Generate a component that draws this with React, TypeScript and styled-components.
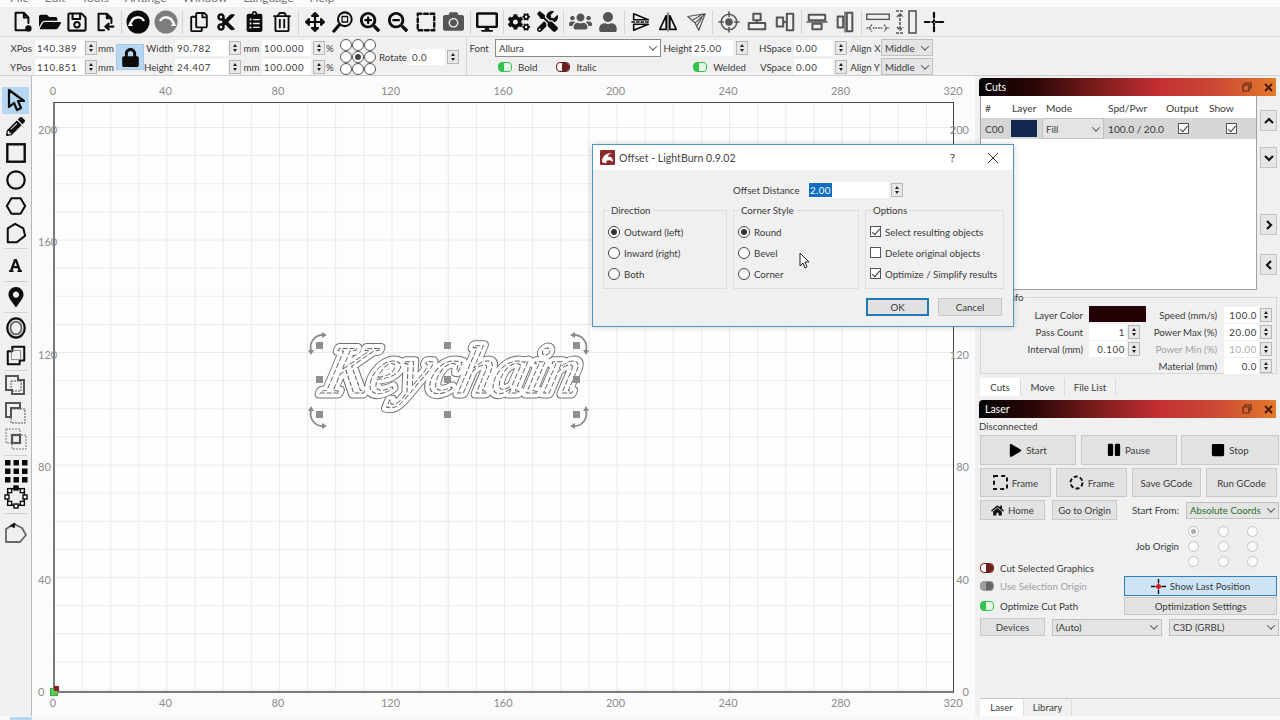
import React from "react";
import styled, { createGlobalStyle } from "styled-components";
import {
  FaFolderOpen, FaRegSave, FaCamera, FaRegTrashAlt, FaCut, FaRegCopy, FaClipboardList,
  FaArrowsAlt, FaSearchPlus, FaSearchMinus, FaDesktop, FaCogs, FaTools, FaUsers, FaUser,
  FaLock, FaHome, FaPlay, FaPause, FaStop, FaMapMarkerAlt, FaFont, FaPencilAlt,
} from "react-icons/fa";

const Global = createGlobalStyle`
  html, body { margin: 0; padding: 0; background: #f0f0f0; }
  body { font-family: Lato, "Open Sans", "Liberation Sans", sans-serif; font-size: 9.7px; color: #3a3a3a; }
  * { box-sizing: border-box; }
`;

const Page = styled.div`
  position: relative; width: 1280px; height: 720px; overflow: hidden;
  display: grid; grid-template-rows: 7px 30px 39px 640px 4px; background: #f0f0f0;
`;
const MenuBar = styled.div`
  display: flex; align-items: flex-end; gap: 16px; padding-left: 10px; background: #fbfbfb;
  overflow: hidden; font-size: 12px; line-height: 12px; color: #777;
  span { margin-bottom: 3px; }
`;
const ToolBar = styled.div`
  display: flex; align-items: center; padding-left: 8px; background: #f0f0f0;
  border-bottom: 1px solid #dcdcdc;
`;
const ToolBtn = styled.div<{ $dim?: boolean }>`
  width: 27.8px; height: 28px; flex: none; display: flex; align-items: center; justify-content: center;
  color: ${(p) => (p.$dim ? "#555" : "#0c0c0c")};
`;
const ToolSep = styled.div`
  width: 5px; height: 24px; flex: none; display: flex; justify-content: center;
  &::after { content: ""; width: 1px; height: 100%; background: #d4d4d4; }
`;
const PropBar = styled.div`
  display: flex; padding: 1px 0 0 8px; background: #f0f0f0; border-bottom: 1px solid #d0d0d0;
`;
const PropA = styled.div`
  display: grid; width: 452px; grid-template-rows: 19px 19px;
  grid-template-columns: 27px 49px 14px 18px 28px 31px 53px 13px 21px 49px 15px 14px 36px 34px 35px 15px;
`;
const PropB = styled.div`
  display: grid; margin-left: 6px; border-left: 1px solid #d4d4d4; width: 468px; grid-template-rows: 19px 19px;
  grid-template-columns: 28px 166px 31px 41px 17px 44px 39px 15px 33px 52px;
`;
const Lab = styled.div<{ $right?: boolean; $dim?: boolean; $col?: number }>`
  align-self: center; white-space: nowrap; font-size: 9.7px; line-height: 12px;
  text-align: ${(p) => (p.$right ? "right" : "left")}; color: ${(p) => (p.$dim ? "#a0a0a0" : "#3a3a3a")};
  ${(p) => (p.$col ? `grid-column: ${p.$col};` : "")}
`;
const RowSpan = styled(Lab)`
  grid-row: 1 / span 2; grid-column: 14; padding-left: 3px;
`;
const Field = styled.div<{ $right?: boolean; $dim?: boolean }>`
  height: 16px; align-self: center; background: #fff; padding: 0 2px; line-height: 16px; font-size: 9.7px; letter-spacing: 0.6px;
  white-space: nowrap; overflow: hidden; text-align: ${(p) => (p.$right ? "right" : "left")};
  color: ${(p) => (p.$dim ? "#aaa" : "#3a3a3a")};
`;
const RotateField = styled(Field)`
  grid-row: 1 / span 2; grid-column: 15;
`;
const SpinBox = styled.div`
  width: 12px; height: 14px; align-self: center; justify-self: center; background: #e8e8e8; border: 1px solid #b8b8b8;
  display: flex; flex-direction: column; align-items: center; justify-content: center; gap: 2px;
  &::before { content: ""; border: 2.5px solid transparent; border-top: 0; border-bottom: 3px solid #222; }
  &::after { content: ""; border: 2.5px solid transparent; border-bottom: 0; border-top: 3px solid #222; }
`;
const RotateSpin = styled(SpinBox)`
  grid-row: 1 / span 2; grid-column: 16;
`;
const LockCell = styled.div`
  grid-row: 1 / span 2; grid-column: 5; height: 26px; align-self: center; background: #b6d6f2;
  border: 1px solid #a5c8e8; display: flex; align-items: center; justify-content: center; color: #0b0b0b;
`;
const DotGrid = styled.div`
  grid-row: 1 / span 2; grid-column: 13; width: 36px; height: 36px; align-self: center;
  display: grid; grid-template-columns: repeat(3, 12px); grid-auto-rows: 12px;
`;
const Dot = styled.div<{ $on?: boolean }>`
  width: 12px; height: 12px; border-radius: 50%; border: 1px solid #555; background: #fff;
  display: flex; align-items: center; justify-content: center;
  &::after { content: ""; width: 6px; height: 6px; border-radius: 50%; background: ${(p) => (p.$on ? "#444" : "transparent")}; }
`;
const Combo = styled.div<{ $plain?: boolean; $color?: string; $fill?: boolean }>`
  height: ${(p) => (p.$fill ? "21px" : p.$plain ? "18px" : "17px")}; align-self: center; display: flex; align-items: center; justify-content: space-between;
  padding: 0 4px 0 3px; font-size: 9.7px; white-space: nowrap;
  background: ${(p) => (p.$plain ? "#fff" : "#e4e4e4")}; border: 1px solid ${(p) => (p.$plain ? "#8a8a8a" : "#c0c0c0")};
  color: ${(p) => p.$color || "#3a3a3a"};
  ${(p) => (p.$fill ? "width: 100%;" : "")}
  &::after { content: ""; width: 5px; height: 5px; border-right: 1px solid #555; border-bottom: 1px solid #555; transform: rotate(45deg) translate(-1px, -1px); }
`;
const ToggleRow = styled.div`
  grid-column: 1 / span 5; display: flex; align-items: center; padding: 0 4px 0 31px;
`;
const ToggleItem = styled.div<{ $push?: boolean; $dim?: boolean; $last?: boolean }>`
  display: flex; align-items: center; gap: 6px; white-space: nowrap; font-size: 9.7px; color: ${(p) => (p.$dim ? "#a0a0a0" : "#3a3a3a")};
  margin-right: ${(p) => (p.$push ? "auto" : p.$last ? "0" : "19px")};
`;
const Toggle = styled.div<{ $on?: boolean; $off?: boolean }>`
  width: 14px; height: 10px; border-radius: 4px; position: relative; flex: none;
  background: ${(p) => (p.$on ? "#35c24f" : p.$off ? "#a0a0a0" : "#fbf4f4")};
  border: 1px solid ${(p) => (p.$on ? "#35c24f" : p.$off ? "#999" : "#6b2020")};
  &::after {
    content: ""; position: absolute; top: 0; bottom: 0; width: 7px; right: 0; border-radius: 0 3px 3px 0;
    background: ${(p) => (p.$on ? "#e6f8e8" : p.$off ? "#666" : "#6b2020")};
  }
`;
const Main = styled.div`
  display: grid; grid-template-columns: 32px 943px 305px; min-height: 0;
`;
const LeftTools = styled.div`
  display: flex; flex-direction: column; align-items: center; padding-top: 11px; background: #f0f0f0;
  border-right: 1px solid #b8b8b8;
`;
const SideBtn = styled.div<{ $h?: number; $active?: boolean }>`
  width: 27px; height: ${(p) => p.$h || 26.5}px; flex: none; display: flex; align-items: center; justify-content: center;
  background: ${(p) => (p.$active ? "#b6d6f2" : "transparent")}; color: #0c0c0c;
`;
const SideSep = styled.div`
  width: 22px; height: 1px; flex: none; margin: 2px 0; background: #d2d2d2;
`;
const CanvasArea = styled.div`
  position: relative; background: #fbfbfb; overflow: hidden;
`;
const Sheet = styled.div`
  position: absolute; left: 21px; top: 26px; width: 900.5px; height: 590.5px;
  border-top: 1px solid #444; border-right: 1px solid #444; border-left: 2px solid #7a7a7a; border-bottom: 2px solid #7a7a7a;
  background-color: #fdfdfd;
  background-image:
    linear-gradient(to right, #e9e9e9 1px, transparent 1px),
    linear-gradient(to top, #e9e9e9 1px, transparent 1px);
  background-size: 28.125px 28.125px; background-position: -1px bottom;
`;
const RulerText = styled.div<{ $x: number; $y: number; $shift?: number }>`
  position: absolute; left: ${(p) => p.$x}px; top: ${(p) => p.$y}px; transform: translate(${(p) => p.$shift ?? -50}%, -50%);
  font-size: 11px; color: #8c8c8c; line-height: 12px;
`;
const Origin = styled.div`
  position: absolute; left: 18px; top: 612px; width: 8px; height: 8px; background: #5ec85a; border: 1px solid #3ea83e;
  &::after { content: ""; position: absolute; left: 3px; top: -3px; width: 5px; height: 5px; background: #8a2020; }
`;
const Art = styled.svg`
  position: absolute; left: 270px; top: 250px; overflow: visible;
`;
const RightCol = styled.div`
  display: flex; flex-direction: column; padding: 2px 0 0 4px; background: #f0f0f0;
`;
const DockHead = styled.div`
  height: 18px; flex: none; width: 297px; border-radius: 4px 0 0 0; display: flex; align-items: center; justify-content: space-between;
  padding: 0 3px 0 6px; color: #fff; font-size: 10.5px;
  background: linear-gradient(to right, #050505 0%, #2a0606 18%, #7d1c1c 40%, #c22f33 60%, #cc4a35 80%, #e37a2c 100%);
`;
const HeadIcons = styled.div`
  display: flex; align-items: center; gap: 12px;
`;
const CutsBody = styled.div`
  display: grid; grid-template-columns: 278px 20px; height: 194px; flex: none;
`;
const CutsTable = styled.div`
  background: #fff; border: 1px solid #a0a0a0; border-top: 0; margin-left: 1px; padding-top: 1px;
`;
const TRow = styled.div<{ $sel?: boolean }>`
  display: grid; grid-template-columns: 30px 31px 62px 58px 43px 52px; height: 21px; align-items: center;
  background: ${(p) => (p.$sel ? "#d6d6d6" : "#fff")}; font-size: 10.2px;
`;
const TCell = styled.div<{ $center?: boolean; $pad?: number }>`
  padding-left: ${(p) => (p.$center ? 0 : p.$pad ?? 4)}px; white-space: nowrap;
  display: flex; align-items: center; ${(p) => (p.$center ? "justify-content:center;" : "")} height: 100%;
`;
const Swatch = styled.div<{ $c: string; $w: number; $h: number }>`
  width: ${(p) => p.$w}px; height: ${(p) => p.$h}px; background: ${(p) => p.$c}; flex: none;
`;
const Check = styled.div<{ $on?: boolean }>`
  width: 11px; height: 11px; border: 1px solid #555; background: #fff; flex: none; position: relative;
  ${(p) => p.$on ? `&::after { content:""; position:absolute; left:3px; top:0; width:3px; height:7px; border-right:1px solid #333; border-bottom:1px solid #333; transform:rotate(40deg);} ` : ""}
`;
const ArrowCol = styled.div`
  display: flex; flex-direction: column; align-items: flex-end; padding-top: 14px;
`;
const ArrowBtn = styled.div<{ $mt: number }>`
  width: 17px; height: 21px; margin-top: ${(p) => p.$mt}px; background: #e6e6e6; border: 1px solid #c4c4c4;
  display: flex; align-items: center; justify-content: center; color: #111; flex: none;
`;
const InfoBox = styled.div`
  margin: 7px 3px 0 1px; height: 77px; flex: none; border: 1px solid #d6d6d6; position: relative;
  display: grid; grid-template-columns: 108px 61px 73px 54px; grid-auto-rows: 17px; padding-top: 8px;
`;
const InfoLegend = styled.div`
  position: absolute; left: 6px; top: -7px; background: #f0f0f0; padding: 0 2px; font-size: 9.7px; line-height: 12px;
`;
const InfoLabel = styled(Lab)`
  text-align: right; padding-right: 6px;
`;
const InfoInput = styled.div`
  display: grid; grid-template-columns: 38px 14px; align-items: center;
`;
const InfoInputR = styled.div`
  display: grid; grid-template-columns: 35px 14px; align-items: center; padding-left: 1px;
`;
const TabRow = styled.div`
  display: flex; margin: 4px 0 4px 1px; height: 18px; flex: none; font-size: 9.7px;
`;
const Tab = styled.div<{ $on?: boolean; $w: number }>`
  width: ${(p) => p.$w}px; display: flex; align-items: center; justify-content: center; padding-bottom: 1px;
  background: ${(p) => (p.$on ? "#fff" : "#f0f0f0")}; border-right: 1px solid #dcdcdc;
`;
const Disc = styled.div`
  height: 17px; flex: none; line-height: 17px; font-size: 9.7px;
`;
const BtnRow = styled.div<{ $cols: string; $h: number; $mt: number; $gap: number }>`
  display: grid; grid-template-columns: ${(p) => p.$cols}; column-gap: ${(p) => p.$gap}px; height: ${(p) => p.$h}px; margin-top: ${(p) => p.$mt}px; margin-left: 1px; flex: none; align-items: center;
`;
const PushBtn = styled.div<{ $blue?: boolean; $h?: number; $mt?: number }>`
  height: ${(p) => (p.$h ? p.$h + "px" : "100%")}; margin-top: ${(p) => p.$mt || 0}px; flex: none; display: flex; align-items: center; justify-content: center; gap: 4px;
  background: ${(p) => (p.$blue ? "#cde4f7" : "#e2e2e2")}; border: 1px solid ${(p) => (p.$blue ? "#2f7fbf" : "#c8c8c8")};
  font-size: 9.7px; white-space: nowrap; color: #3a3a3a;
`;
const LaserLower = styled.div`
  display: grid; grid-template-columns: 144px 153px; margin: 0 0 0 1px; height: 97px; flex: none;
`;
const LowerLeft = styled.div`
  display: flex; flex-direction: column; padding-top: 39px;
`;
const OptRow = styled.div<{ $h: number }>`
  height: ${(p) => p.$h}px; display: flex; align-items: center; flex: none;
`;
const LowerRight = styled.div`
  display: flex; flex-direction: column;
`;
const OriginRow = styled.div`
  height: 56px; padding-bottom: 4px; display: grid; grid-template-columns: 55px 1fr; align-items: center; flex: none;
`;
const OriginGrid = styled.div`
  width: 70px; height: 51px; margin-left: 9px; display: grid; grid-template-columns: repeat(3, 29.5px); grid-auto-rows: 15px; padding-top: 3px; justify-items: start; align-items: center; background: #eeeeee;
`;
const LRadio = styled.div<{ $on?: boolean }>`
  width: 11px; height: 11px; border-radius: 50%; border: 1px solid #c4c4c4; background: #fafafa; display: flex; align-items: center; justify-content: center;
  &::after { content: ""; width: 5px; height: 5px; border-radius: 50%; background: ${(p) => (p.$on ? "#aaa" : "transparent")}; }
`;
const Spacer = styled.div`
  flex: 1;
`;
const TabLine = styled.div`
  flex: none; height: 18px; border-top: 1px solid #c8c8c8; margin-left: 1px; display: flex; font-size: 9.7px;
`;
const StatusBar = styled.div`
  background: #f8f8f8; padding: 1px 0 0 10px;
`;
const StatusChip = styled.div`
  width: 22px; height: 3px; background: #b6d6f2;
`;

const Dialog = styled.div`
  position: absolute; left: 592px; top: 144px; width: 422px; height: 183px; background: #f0f0f0;
  border: 1px solid #4d95c9; box-shadow: 0 0 6px rgba(0,0,0,0.18); display: flex; flex-direction: column;
`;
const DlgTitle = styled.div`
  height: 25px; flex: none; background: #fff; display: flex; align-items: center; padding: 0 15px 0 7px; font-size: 10.6px; color: #444;
`;
const DlgName = styled.div`
  margin-left: 4px; flex: 1;
`;
const DlgHelp = styled.div`
  font-size: 12px; margin-right: 33px;
`;
const DlgBody = styled.div`
  display: flex; flex-direction: column; padding: 0 10px; flex: 1;
`;
const OffsetRow = styled.div`
  display: flex; align-items: center; margin-top: 12px; height: 16px; padding-left: 130px;
`;
const OffsetLab = styled(Lab)`
  width: 68px;
`;
const OffsetInput = styled.div`
  width: 81px; height: 16px; margin-left: 7px; background: #fff; padding-left: 1px; line-height: 16px; font-size: 9.7px; letter-spacing: 0.4px;
  span { background: #0f6fc4; color: #fff; padding: 1px; }
`;
const DlgSpin = styled(SpinBox)`
  margin-left: 2px;
`;
const Groups = styled.div`
  display: grid; grid-template-columns: 124px 126px 139px; gap: 0 6px; margin-top: 12px;
`;
const Group = styled.div`
  height: 79px; border: 1px solid #dedede; position: relative; display: flex; flex-direction: column; padding: 10px 0 0 4px;
`;
const Legend = styled.div`
  position: absolute; left: 5px; top: -7px; padding: 0 2px; background: #f0f0f0; font-size: 9.7px; line-height: 12px;
`;
const OptLine = styled.div`
  height: 21px; flex: none; display: flex; align-items: center; gap: 4px; font-size: 9.7px; white-space: nowrap;
`;
const Radio = styled.div<{ $on?: boolean }>`
  width: 12px; height: 12px; border-radius: 50%; border: 1px solid #444; background: #fff; display: flex; align-items: center; justify-content: center; flex: none;
  &::after { content: ""; width: 6px; height: 6px; border-radius: 50%; background: ${(p) => (p.$on ? "#333" : "transparent")}; }
`;
const DlgButtons = styled.div`
  display: flex; justify-content: flex-end; gap: 9px; margin-top: 9px; padding-right: 1px;
`;
const DlgBtn = styled.div<{ $def?: boolean }>`
  width: ${(p) => (p.$def ? 63 : 64)}px; height: 18px; display: flex; align-items: center; justify-content: center; font-size: 9.7px;
  background: #e1e1e1; border: 1px solid ${(p) => (p.$def ? "#1f78b8" : "#c4c4c4")}; ${(p) => (p.$def ? "box-shadow: inset 0 0 0 1px #1f78b8;" : "")}
`;
const Cursor = styled.svg`
  position: absolute; left: 799px; top: 252px;
`;

const S = (p: { size?: number; children: React.ReactNode; vb?: string }) => (
  <svg width={p.size || 22} height={p.size || 22} viewBox={p.vb || "0 0 24 24"} fill="none" stroke="currentColor" strokeWidth="2.2" strokeLinejoin="round" strokeLinecap="round">{p.children}</svg>
);
const NewDoc = () => <S><path d="M16 21H5V2h9l5 5v6M14 2v5h5" /><circle cx="19" cy="19" r="2.4" fill="currentColor" /></S>;
const ImportI = () => <S><path d="M11 21H5V3h9l5 5v5M14 3v5h5" /><path d="M21 17h-8m3-3l-3.5 3 3.5 3" strokeWidth="2.6" /></S>;
const Undo = ({ dim }: { dim?: boolean }) => (
  <svg width="24" height="24" viewBox="0 0 24 24"><circle cx="12" cy="12" r="11.5" fill={dim ? "#7d7d7d" : "#0a0a0a"} /><path d={dim ? "M19 13a7 7 0 0 0-13-2" : "M5 13a7 7 0 0 1 13-2"} stroke="#fff" strokeWidth="2.4" fill="none" /><path d={dim ? "M17 16l3-5 2 5z" : "M7 16l-3-5-2 5z"} fill="#fff" /></svg>
);
const ZoomSel = () => <S><circle cx="14" cy="9" r="7.5" /><path d="M8 15l-6 7" strokeWidth="3.4" /><rect x="11" y="6" width="6" height="6" strokeWidth="1.4" /></S>;
const DashFrame = () => <S><rect x="3" y="3" width="18" height="18" strokeDasharray="4 3" strokeWidth="2.6" /></S>;
const Gray = ({ children }: { children: React.ReactNode }) => <ToolBtn $dim>{children}</ToolBtn>;
const FlipI = () => <S><path d="M4 3l16 6.5H4zM4 21l16-6.5H4z" strokeWidth="1.8" /><path d="M2 12h20" strokeDasharray="3 2" strokeWidth="1.4" /></S>;
const MirrorI = () => <S><path d="M10 5L3 20h7zM14 5l7 15h-7z" strokeWidth="1.8" /><path d="M12 2v20" strokeWidth="1" /></S>;
const PlaneI = () => <S><path d="M3 6l19-3-7 18-4-8zM22 3L11 13M8 10l9-5M13 16l5-8" strokeWidth="1.3" /></S>;
const Center = () => <S><circle cx="12" cy="12" r="8.5" strokeWidth="1.7" /><circle cx="12" cy="12" r="3" fill="currentColor" /><path d="M12 1v5M12 18v5M1 12h5M18 12h5" strokeWidth="1.7" /></S>;
const AlignA = () => <S><rect x="8" y="3" width="8" height="7" /><rect x="3" y="13" width="18" height="7" /><path d="M12 10v3" /></S>;
const AlignB = () => <S><rect x="3" y="7" width="7" height="10" /><rect x="14" y="3" width="7" height="18" /><path d="M10 12h4" /></S>;
const AlignC = () => <S><rect x="3" y="4" width="18" height="6" /><rect x="7" y="14" width="10" height="6" /><path d="M1 12h22" strokeWidth="1.4" /></S>;
const AlignD = () => <S><rect x="4" y="6" width="6" height="12" /><rect x="14" y="2" width="6" height="20" /><path d="M12 1v22" strokeWidth="1.4" /></S>;
const SpaceH = () => <svg width="26" height="24" viewBox="0 0 30 24" fill="none" stroke="#555" strokeWidth="1.6"><rect x="2" y="3" width="26" height="6" /><path d="M2 19h4M24 19h4M8 15l-3 4 3 4M22 15l3 4-3 4M9 19h12" strokeDasharray="2 1" /></svg>;
const SpaceV = () => <svg width="24" height="26" viewBox="0 0 24 26" fill="none" stroke="#555" strokeWidth="1.6"><rect x="15" y="2" width="7" height="22" /><path d="M2 2h8M2 24h8M6 5v16M3 8l3-3 3 3M3 18l3 3 3-3" strokeDasharray="3 1" /></svg>;
const CrossH = () => <S><path d="M12 2v5M12 10v1M12 14v1M12 17v5M2 12h5M10 12h1M14 12h1M17 12h5" strokeWidth="2.4" /></S>;
const SelectArrow = () => <svg width="20" height="24" viewBox="0 0 20 24" fill="#b6d6f2" stroke="#0a0a0a" strokeWidth="2.2" strokeLinejoin="round"><path d="M3 2v17l5-4 3 7 4-2-3-7h6z" /></svg>;
const Circle = () => <S><circle cx="12" cy="12" r="9.5" strokeWidth="2.4" /></S>;
const Hex = () => <S><path d="M7 3.5h10L22 12l-5 8.5H7L2 12z" strokeWidth="2.2" /></S>;
const Poly = () => <S><path d="M3 7l8-5 9 5 2 8-9 7H3z" strokeWidth="2.2" /></S>;
const Rings = () => <S><ellipse cx="12" cy="12" rx="9.5" ry="10.5" strokeWidth="2.4" /><ellipse cx="12" cy="12" rx="6" ry="7" stroke="#666" strokeWidth="2" /></S>;
const OffsetA = () => <S><path d="M8 3h13v15h-5v4H3V8h5z" /><rect x="7" y="7" width="10" height="10" strokeWidth="1" strokeDasharray="2 1" stroke="#777" /></S>;
const Bool1 = () => <svg width="24" height="24" viewBox="0 0 24 24" fill="none" stroke="#555" strokeWidth="2"><path d="M2 2h12v4h6v14H8v-4H2z" /><rect x="7" y="7" width="10" height="10" strokeWidth="1" strokeDasharray="2 1" /></svg>;
const Bool2 = () => <svg width="24" height="24" viewBox="0 0 24 24" fill="none" stroke="#555" strokeWidth="2"><path d="M2 16V2h14v5H7v9z" /><rect x="7" y="8" width="14" height="14" strokeWidth="1" strokeDasharray="2 1" /></svg>;
const Bool3 = () => <svg width="24" height="24" viewBox="0 0 24 24" fill="none" stroke="#777" strokeWidth="1"><rect x="2" y="2" width="14" height="14" strokeDasharray="2 1" /><rect x="8" y="8" width="14" height="14" strokeDasharray="2 1" /><rect x="8" y="8" width="8" height="8" strokeWidth="2.2" stroke="#555" /></svg>;
const GridI = () => <svg width="24" height="24" viewBox="0 0 24 24" fill="#0a0a0a">{[1, 9.5, 18].flatMap((y) => [1, 9.5, 18].map((x) => <rect key={`${x}-${y}`} x={x} y={y} width="5.5" height="5.5" />))}</svg>;
const CircGrid = () => <svg width="24" height="24" viewBox="0 0 24 24" fill="none" stroke="#0a0a0a" strokeWidth="1.4"><circle cx="12" cy="12" r="9" />{[0, 45, 90, 135, 180, 225, 270, 315].map((a) => { const r = (a * Math.PI) / 180; return <rect key={a} x={12 + 9 * Math.sin(r) - 2} y={12 - 9 * Math.cos(r) - 2} width="4" height="4" fill={a === 0 ? "#0a0a0a" : "#fff"} />; })}</svg>;
const NodeI = () => <svg width="24" height="24" viewBox="0 0 24 24" fill="none" stroke="#666" strokeWidth="1.8" strokeLinejoin="round"><path d="M2 9l8-5 8 4 4 7-6 7H2z" /><path d="M6 6l5-3-1 5" stroke="#111" fill="#111" strokeWidth="1" /></svg>;
const FrameA = () => <svg width="15" height="15" viewBox="0 0 15 15" fill="none" stroke="#111" strokeWidth="2"><rect x="1" y="1" width="13" height="13" strokeDasharray="4 3.2" /></svg>;
const FrameB = () => <svg width="15" height="15" viewBox="0 0 15 15" fill="none" stroke="#111" strokeWidth="2"><circle cx="7.5" cy="7.5" r="6" strokeDasharray="4 2.2" /></svg>;
const LastPos = () => <svg width="15" height="15" viewBox="0 0 15 15" fill="none" stroke="#111" strokeWidth="1.4"><path d="M7.5 0v4M7.5 11v4M0 7.5h4M11 7.5h4" /><circle cx="7.5" cy="7.5" r="1.8" fill="#c22" stroke="#c22" /><path d="M7.5 4v7M4 7.5h7" stroke="#c22" strokeWidth="1" /></svg>;
const Chev = ({ d }: { d: string }) => <svg width="10" height="10" viewBox="0 0 10 10" fill="none" stroke="#111" strokeWidth="2.2"><path d={d} /></svg>;
const FloatIcon = () => <svg width="10" height="10" viewBox="0 0 10 10" fill="none" stroke="#5a2a12" strokeWidth="1.2"><path d="M3 3V1h6v5H7M1 3h6v6H1z" /></svg>;
const CloseIcon = () => <svg width="9" height="9" viewBox="0 0 9 9" stroke="#4a1a0a" strokeWidth="2"><path d="M1 1l7 7M8 1L1 8" /></svg>;

const RotArrow = ({ x, y, fx, fy }: { x: number; y: number; fx: number; fy: number }) => (
  <g transform={`translate(${x} ${y}) scale(${fx} ${fy})`} fill="none" stroke="#8b8b8b" strokeWidth="1.8">
    <path d="M3 -11A12 12 0 0 0 -9 4" />
    <path d="M2 -14L7 -11L2 -8zM-12 4L-9 9L-6 4z" fill="#8b8b8b" stroke="none" />
  </g>
);
const Handle = ({ x, y }: { x: number; y: number }) => <rect x={x - 4} y={y - 4} width="7" height="7" fill="#8f8f8f" />;

const App = () => {
  const xTop = [0, 40, 80, 120, 160, 200, 240, 280, 320];
  const ys = [200, 160, 120, 80, 40, 0];
  return (
    <Page>
      <Global />
      <MenuBar>
        {["File", "Edit", "Tools", "Arrange", "Window", "Language", "Help"].map((m) => <span key={m}>{m}</span>)}
      </MenuBar>
      <ToolBar>
        <ToolBtn><NewDoc /></ToolBtn>
        <ToolBtn><FaFolderOpen size={22} /></ToolBtn>
        <ToolBtn><FaRegSave size={22} /></ToolBtn>
        <ToolBtn><ImportI /></ToolBtn>
        <ToolSep />
        <ToolBtn><Undo /></ToolBtn>
        <ToolBtn><Undo dim /></ToolBtn>
        <ToolSep />
        <ToolBtn><FaRegCopy size={20} /></ToolBtn>
        <ToolBtn><FaCut size={20} /></ToolBtn>
        <ToolBtn><FaClipboardList size={21} /></ToolBtn>
        <ToolBtn><FaRegTrashAlt size={20} /></ToolBtn>
        <ToolSep />
        <ToolBtn><FaArrowsAlt size={20} /></ToolBtn>
        <ToolBtn><ZoomSel /></ToolBtn>
        <ToolBtn><FaSearchPlus size={20} /></ToolBtn>
        <ToolBtn><FaSearchMinus size={20} /></ToolBtn>
        <ToolBtn><DashFrame /></ToolBtn>
        <Gray><FaCamera size={21} /></Gray>
        <ToolSep />
        <ToolBtn><FaDesktop size={22} /></ToolBtn>
        <ToolSep />
        <ToolBtn><FaCogs size={22} /></ToolBtn>
        <ToolBtn><FaTools size={21} /></ToolBtn>
        <ToolSep />
        <Gray><FaUsers size={23} /></Gray>
        <Gray><FaUser size={20} /></Gray>
        <ToolSep />
        <ToolBtn><FlipI /></ToolBtn>
        <ToolBtn><MirrorI /></ToolBtn>
        <Gray><PlaneI /></Gray>
        <ToolSep />
        <Gray><Center /></Gray>
        <Gray><AlignA /></Gray>
        <Gray><AlignB /></Gray>
        <ToolSep />
        <Gray><AlignC /></Gray>
        <Gray><AlignD /></Gray>
        <ToolSep />
        <Gray><SpaceH /></Gray>
        <Gray><SpaceV /></Gray>
        <ToolBtn><CrossH /></ToolBtn>
      </ToolBar>
      <PropBar>
        <PropA>
          <Lab>&nbsp;XPos</Lab><Field>140.389</Field><SpinBox /><Lab>mm</Lab>
          <LockCell><FaLock size={19} /></LockCell>
          <Lab>&nbsp;Width</Lab><Field>90.782</Field><SpinBox /><Lab>&nbsp;mm</Lab><Field>100.000</Field><SpinBox /><Lab>%</Lab>
          <DotGrid>{[0, 1, 2, 3, 4, 5, 6, 7, 8].map((i) => <Dot key={i} $on={i === 4} />)}</DotGrid>
          <RowSpan>Rotate</RowSpan>
          <RotateField>0.0</RotateField>
          <RotateSpin />
          <Lab $col={1}>&nbsp;YPos</Lab><Field>110.851</Field><SpinBox /><Lab>mm</Lab>
          <Lab $col={6} $right>Height&nbsp;</Lab><Field>24.407</Field><SpinBox /><Lab>&nbsp;mm</Lab><Field>100.000</Field><SpinBox /><Lab>%</Lab>
        </PropA>
        <PropB>
          <Lab>&nbsp;Font</Lab><Combo $plain>Allura</Combo>
          <Lab>&nbsp;Height</Lab><Field>25.00</Field><SpinBox />
          <Lab $right>HSpace&nbsp;</Lab><Field>0.00</Field><SpinBox /><Lab>&nbsp;Align X</Lab><Combo>Middle</Combo>
          <ToggleRow>
            <ToggleItem><Toggle $on />Bold</ToggleItem>
            <ToggleItem $push><Toggle />Italic</ToggleItem>
            <ToggleItem $last><Toggle $on />Welded</ToggleItem>
          </ToggleRow>
          <Lab $right>VSpace&nbsp;</Lab><Field>0.00</Field><SpinBox /><Lab>&nbsp;Align Y</Lab><Combo>Middle</Combo>
        </PropB>
      </PropBar>
      <Main>
        <LeftTools>
          <SideBtn $active><SelectArrow /></SideBtn>
          <SideBtn><FaPencilAlt size={19} /></SideBtn>
          <SideBtn><S><rect x="2.5" y="2.5" width="19" height="19" strokeWidth="2.6" strokeLinejoin="miter" /></S></SideBtn>
          <SideBtn><Circle /></SideBtn>
          <SideBtn><Hex /></SideBtn>
          <SideBtn><Poly /></SideBtn>
          <SideSep />
          <SideBtn $h={28}><FaFont size={15} /></SideBtn>
          <SideSep />
          <SideBtn $h={26}><FaMapMarkerAlt size={20} /></SideBtn>
          <SideSep />
          <SideBtn><Rings /></SideBtn>
          <SideBtn><OffsetA /></SideBtn>
          <SideSep />
          <SideBtn><Bool1 /></SideBtn>
          <SideBtn><Bool2 /></SideBtn>
          <SideBtn><Bool3 /></SideBtn>
          <SideSep />
          <SideBtn><GridI /></SideBtn>
          <SideBtn><CircGrid /></SideBtn>
          <SideSep />
          <SideBtn $h={32}><NodeI /></SideBtn>
        </LeftTools>
        <CanvasArea>
          <Sheet />
          {xTop.map((v) => <RulerText key={`t${v}`} $x={21 + v * 2.8125} $y={15}>{v}</RulerText>)}
          {xTop.map((v) => <RulerText key={`b${v}`} $x={21 + v * 2.8125} $y={627}>{v}</RulerText>)}
          {ys.map((v) => <RulerText key={`l${v}`} $x={6} $y={616 - v * 2.8125} $shift={0}>{v}</RulerText>)}
          {ys.filter((v) => v !== 160).map((v) => <RulerText key={`r${v}`} $x={937} $y={616 - v * 2.8125} $shift={-100}>{v}</RulerText>)}
          <Origin />
          <Art width="300" height="110" viewBox="0 0 300 110">
            <g transform="translate(12 67) skewX(-14)" fontFamily="'Liberation Serif', serif" fontStyle="italic" fontSize="68">
              <text x="7" y="0" textLength="254" lengthAdjust="spacingAndGlyphs" fill="none" stroke="#707070" strokeWidth="11" strokeLinejoin="round">Keychain</text>
              <text x="7" y="0" textLength="254" lengthAdjust="spacingAndGlyphs" fill="#fff" stroke="#fdfdfd" strokeWidth="9" strokeLinejoin="round">Keychain</text>
              <text x="7" y="0" textLength="254" lengthAdjust="spacingAndGlyphs" fill="none" stroke="#666" strokeWidth="1" strokeDasharray="5 2">Keychain</text>
            </g>
            <Handle x={18} y={20} /><Handle x={146} y={20} /><Handle x={275} y={20} />
            <Handle x={18} y={54} /><Handle x={146} y={54} /><Handle x={275} y={54} />
            <Handle x={18} y={89} /><Handle x={146} y={89} /><Handle x={275} y={89} />
            <RotArrow x={18} y={20} fx={1} fy={1} />
            <RotArrow x={275} y={20} fx={-1} fy={1} />
            <RotArrow x={18} y={89} fx={1} fy={-1} />
            <RotArrow x={275} y={89} fx={-1} fy={-1} />
          </Art>
        </CanvasArea>
        <RightCol>
          <DockHead>Cuts<HeadIcons><FloatIcon /><CloseIcon /></HeadIcons></DockHead>
          <CutsBody>
            <CutsTable>
              <TRow>
                <TCell>#</TCell><TCell $pad={1}>Layer</TCell><TCell>Mode</TCell><TCell>Spd/Pwr</TCell><TCell>Output</TCell><TCell>Show</TCell>
              </TRow>
              <TRow $sel>
                <TCell>C00</TCell>
                <TCell $pad={0}><Swatch $c="#13284f" $w={26} $h={17} /></TCell>
                <TCell $pad={0}><Combo $fill>Fill</Combo></TCell>
                <TCell>100.0 / 20.0</TCell>
                <TCell $center><Check $on /></TCell>
                <TCell $center><Check $on /></TCell>
              </TRow>
            </CutsTable>
            <ArrowCol>
              <ArrowBtn $mt={0}><Chev d="M1 7l4-4 4 4" /></ArrowBtn>
              <ArrowBtn $mt={16}><Chev d="M1 3l4 4 4-4" /></ArrowBtn>
              <ArrowBtn $mt={46}><Chev d="M3 1l4 4-4 4" /></ArrowBtn>
              <ArrowBtn $mt={19}><Chev d="M7 1L3 5l4 4" /></ArrowBtn>
            </ArrowCol>
          </CutsBody>
          <InfoBox>
            <InfoLegend>Cut Info</InfoLegend>
            <InfoLabel>Layer Color</InfoLabel><Swatch $c="#220205" $w={57} $h={16} />
            <InfoLabel>Speed (mm/s)</InfoLabel><InfoInputR><Field $right>100.0</Field><SpinBox /></InfoInputR>
            <InfoLabel>Pass Count</InfoLabel><InfoInput><Field $right>1</Field><SpinBox /></InfoInput>
            <InfoLabel>Power Max (%)</InfoLabel><InfoInputR><Field $right>20.00</Field><SpinBox /></InfoInputR>
            <InfoLabel>Interval (mm)</InfoLabel><InfoInput><Field $right>0.100</Field><SpinBox /></InfoInput>
            <InfoLabel $dim>Power Min (%)</InfoLabel><InfoInputR><Field $right $dim>10.00</Field><SpinBox /></InfoInputR>
            <div /><div />
            <InfoLabel>Material (mm)</InfoLabel><InfoInputR><Field $right>0.0</Field><SpinBox /></InfoInputR>
          </InfoBox>
          <TabRow>
            <Tab $on $w={41}>Cuts</Tab><Tab $w={44}>Move</Tab><Tab $w={51}>File List</Tab>
          </TabRow>
          <DockHead>Laser<HeadIcons><FloatIcon /><CloseIcon /></HeadIcons></DockHead>
          <Disc>Disconnected</Disc>
          <BtnRow $cols="96px 96px 98px" $h={30} $mt={0} $gap={4.5}>
            <PushBtn><FaPlay size={13} color="#000" />Start</PushBtn>
            <PushBtn><FaPause size={14} color="#000" />Pause</PushBtn>
            <PushBtn><FaStop size={14} color="#000" />Stop</PushBtn>
          </BtnRow>
          <BtnRow $cols="71px 71px 69px 71px" $h={29} $mt={3} $gap={5}>
            <PushBtn><FrameA />Frame</PushBtn>
            <PushBtn><FrameB />Frame</PushBtn>
            <PushBtn>Save GCode</PushBtn>
            <PushBtn>Run GCode</PushBtn>
          </BtnRow>
          <BtnRow $cols="65px 65px 55px 93px" $h={20} $mt={3} $gap={7}>
            <PushBtn><FaHome size={13} color="#111" />Home</PushBtn>
            <PushBtn>Go to Origin</PushBtn>
            <Lab $right>Start From:</Lab>
            <Combo $color="#2d6b2d">Absolute Coords</Combo>
          </BtnRow>
          <LaserLower>
            <LowerLeft>
              <OptRow $h={18}><ToggleItem><Toggle />Cut Selected Graphics</ToggleItem></OptRow>
              <OptRow $h={18}><ToggleItem $dim><Toggle $off />Use Selection Origin</ToggleItem></OptRow>
              <OptRow $h={21}><ToggleItem><Toggle $on />Optimize Cut Path</ToggleItem></OptRow>
            </LowerLeft>
            <LowerRight>
              <OriginRow>
                <Lab $right>Job Origin</Lab>
                <OriginGrid>{[0, 1, 2, 3, 4, 5, 6, 7, 8].map((i) => <LRadio key={i} $on={i === 0} />)}</OriginGrid>
              </OriginRow>
              <PushBtn $blue $h={20}><LastPos />Show Last Position</PushBtn>
              <PushBtn $h={18} $mt={1}>Optimization Settings</PushBtn>
            </LowerRight>
          </LaserLower>
          <BtnRow $cols="65px 110px 110px" $h={18} $mt={1} $gap={7}>
            <PushBtn>Devices</PushBtn>
            <Combo>(Auto)</Combo>
            <Combo>C3D (GRBL)</Combo>
          </BtnRow>
          <Spacer />
          <TabLine>
            <Tab $on $w={44}>Laser</Tab><Tab $w={48}>Library</Tab>
          </TabLine>
        </RightCol>
      </Main>
      <StatusBar><StatusChip /></StatusBar>
      <Dialog>
        <DlgTitle>
          <svg width="15" height="15" viewBox="0 0 15 15"><rect width="15" height="15" rx="1" fill="#8d2a2c" /><path d="M2 12c0-5 3-9 10-9-3 1-4 2-4 4 3-1 5 1 5 5-2-2-5-2-7-1 1 1 1 1 0 2-2 0-3 0-4-1z" fill="#fff" /></svg>
          <DlgName>Offset - LightBurn 0.9.02</DlgName>
          <DlgHelp>?</DlgHelp>
          <svg width="10" height="10" viewBox="0 0 10 10" stroke="#333" strokeWidth="1"><path d="M0 0l10 10M10 0L0 10" /></svg>
        </DlgTitle>
        <DlgBody>
          <OffsetRow>
            <OffsetLab>Offset Distance</OffsetLab>
            <OffsetInput><span>2.00</span></OffsetInput>
            <DlgSpin />
          </OffsetRow>
          <Groups>
            <Group>
              <Legend>Direction</Legend>
              <OptLine><Radio $on />Outward (left)</OptLine>
              <OptLine><Radio />Inward (right)</OptLine>
              <OptLine><Radio />Both</OptLine>
            </Group>
            <Group>
              <Legend>Corner Style</Legend>
              <OptLine><Radio $on />Round</OptLine>
              <OptLine><Radio />Bevel</OptLine>
              <OptLine><Radio />Corner</OptLine>
            </Group>
            <Group>
              <Legend>Options</Legend>
              <OptLine><Check $on />Select resulting objects</OptLine>
              <OptLine><Check />Delete original objects</OptLine>
              <OptLine><Check $on />Optimize / Simplify results</OptLine>
            </Group>
          </Groups>
          <DlgButtons>
            <DlgBtn $def>OK</DlgBtn>
            <DlgBtn>Cancel</DlgBtn>
          </DlgButtons>
        </DlgBody>
      </Dialog>
      <Cursor width="12" height="18" viewBox="0 0 12 18" fill="#fff" stroke="#222" strokeWidth="1"><path d="M1 1v13l3-3 2 5 2-1-2-5h4z" /></Cursor>
    </Page>
  );
};

export default App;
